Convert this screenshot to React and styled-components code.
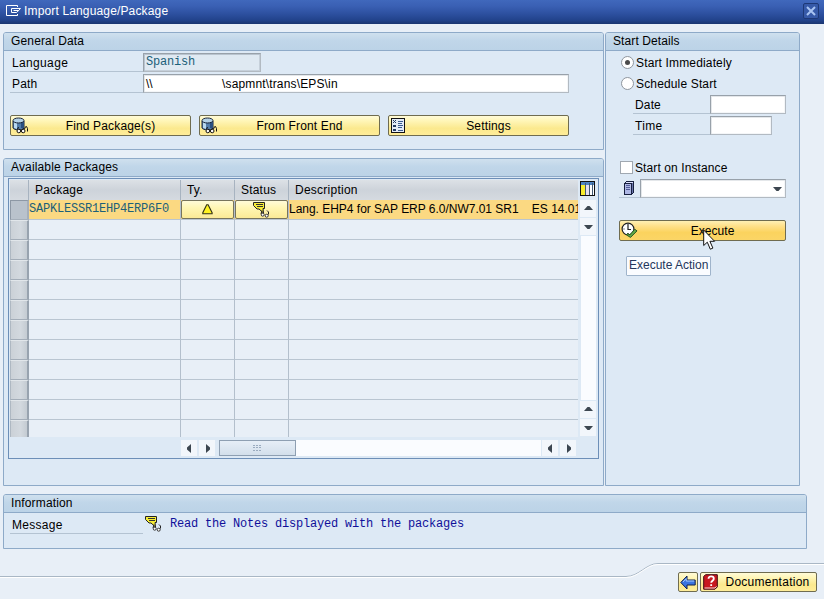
import React from "react";
import styled, { createGlobalStyle } from "styled-components";

const Global = createGlobalStyle`
  * { box-sizing: border-box; }
  body { margin: 0; overflow: hidden; }
`;

const Window = styled.div`
  width: 824px;
  height: 599px;
  display: flex;
  flex-direction: column;
  position: relative;
  background: #e8eff7;
  font: 12px/14px "Liberation Sans", Arial, sans-serif;
  color: #000;
  overflow: hidden;
`;

const Text = styled.span`
  white-space: pre;
  letter-spacing: ${(p) => p.$ls ?? 0.15}px;
`;

const Mono = styled.span`
  font: 12px/14px "Liberation Mono", "Courier New", monospace;
  letter-spacing: -0.2px;
  white-space: pre;
  color: ${(p) => p.$color || "#1c6079"};
`;

const TitleBar = styled.header`
  height: 24px;
  flex: none;
  display: flex;
  align-items: center;
  padding: 0 5px 2px 6px;
  gap: 3px;
  color: #fff;
  background: linear-gradient(#4068bc 0, #3a60b4 25%, #2c4f9e 60%, #21428a 85%, #1a3570 100%);
`;

const CloseButton = styled.button`
  margin-left: auto;
  width: 16px;
  height: 16px;
  padding: 0;
  display: grid;
  place-items: center;
  border: 1px solid #1d3876;
  border-radius: 2px;
  background: #3659a8;
`;

const Main = styled.main`
  height: 454px;
  margin: 8px 0 0 3px;
  display: flex;
  gap: 1px;
`;

const LeftColumn = styled.div`
  width: 601px;
  display: flex;
  flex-direction: column;
  gap: 8px;
`;

const Group = styled.section`
  width: ${(p) => p.$w}px;
  height: ${(p) => p.$h}px;
  flex: none;
  display: flex;
  flex-direction: column;
  border: 1px solid #8eaac8;
  border-radius: 3px 3px 0 0;
  background: #dde9f5;
`;

const GroupTitle = styled.h2`
  margin: 0;
  height: 18px;
  flex: none;
  padding: 1px 7px 0;
  font: inherit;
  line-height: 15px;
  border-bottom: 1px solid #8eaac8;
  border-radius: 2px 2px 0 0;
  background: linear-gradient(#cfe0ee, #c0d6e9 45%, #bcd3e7);
`;

const GeneralBody = styled.div`
  padding: 2px 6px;
`;

const FieldRow = styled.div`
  display: flex;
  height: 21px;
  align-items: flex-start;
`;

const Label = styled.label`
  width: ${(p) => p.$w}px;
  height: 19px;
  padding: 3px 0 0 2px;
  border-bottom: 1px solid #b4c3d2;
`;

const Field = styled.div`
  width: ${(p) => p.$w}px;
  height: 19px;
  padding: ${(p) => (p.$off ? 1 : 2)}px 2px 0;
  display: flex;
  justify-content: space-between;
  border: 1px solid;
  border-color: #98a1aa #b2bac2 #b2bac2 #98a1aa;
  box-shadow: inset 1px 1px 0 ${(p) => (p.$off ? "#b9c4cf" : "#e4e7ea")}, inset -1px -1px 0 ${(p) => (p.$off ? "#c6d0da" : "#f4f6f8")};
  background: ${(p) => (p.$off ? "#dfe9f2" : "#fff")};
`;

const PathHost = styled.span`
  width: 76px;
`;

const PathText = styled.div`
  display: flex;
`;

const ButtonRow = styled.div`
  display: flex;
  gap: 8px;
  padding-top: 20px;
`;

const Button = styled.button`
  width: ${(p) => p.$w}px;
  height: ${(p) => p.$h || 21}px;
  flex: none;
  display: grid;
  grid-template-columns: 17px 1fr;
  align-items: center;
  justify-items: center;
  padding: 0 0 0 1px;
  font: inherit;
  color: #000;
  border: 1px solid #6f6c50;
  border-radius: 2px;
  background: ${(p) =>
    p.$hot
      ? "linear-gradient(#fff0b4 0, #ffe18c 25%, #fbd35e 60%, #fbd566 100%)"
      : "linear-gradient(#fffbd8 0, #fff6b8 25%, #fbe98e 65%, #ffed99 100%)"};
`;

const ButtonText = styled(Text)`
  padding-left: ${(p) => p.$pl ?? 2}px;
`;

const StartBody = styled.div`
  padding: 2px 13px;
  display: flex;
  flex-direction: column;
`;

const Choice = styled.label`
  height: 21px;
  padding: 3px 0 0 2px;
  display: flex;
  gap: 2px;
`;

const Radio = styled.span`
  width: 13px;
  height: 13px;
  display: grid;
  place-items: center;
  border: 1px solid #8f969e;
  border-radius: 50%;
  background: #fff;

  &::after {
    content: "";
    width: 5px;
    height: 5px;
    border-radius: 50%;
    background: ${(p) => (p.$on ? "#4a4a4a" : "transparent")};
  }
`;

const CheckBox = styled.span`
  width: 13px;
  height: 13px;
  margin-left: -1px;
  border: 1px solid #a0a8b1;
  background: #fff;
`;

const TimeRows = styled.div`
  padding-left: 14px;
  height: 63px;
`;

const InstanceRow = styled.div`
  display: flex;
  height: 19px;
`;

const ServerCell = styled.div`
  width: 21px;
  height: 19px;
  padding: 2px 0 0 4px;
  border-bottom: 1px solid #b4c3d2;
`;

const Select = styled(Field)`
  align-items: center;
  justify-content: flex-end;
  padding: 0 3px 0 0;
`;

const ExecuteSlot = styled.div`
  padding-top: 22px;
`;

const Tip = styled.div`
  width: 85px;
  height: 20px;
  margin: 15px 0 0 7px;
  padding: 1px 2px;
  color: #24365c;
  border: 1px solid #9fb4cb;
  border-radius: 1px;
  background: #fafcff;
  white-space: nowrap;
`;

const Pointer = styled.svg`
  position: absolute;
  left: 703px;
  top: 229px;
`;

const TableFrame = styled.div`
  width: 591px;
  height: 281px;
  margin: 1px 0 0 4px;
  padding: 1px;
  border: 1px solid #6d8fb8;
  display: grid;
  grid-template-columns: 568px 18px;
  grid-template-rows: 257px 20px;
  column-gap: 2px;
`;

const Grid = styled.div`
  width: 568px;
  height: 257px;
  overflow: hidden;
`;

const Row = styled.div`
  display: grid;
  grid-template-columns: 19px 152px 54px 54px 289px;
  height: 20px;
`;

const HeadCell = styled.div`
  padding: 3px 0 0 6px;
  border-right: 1px solid #a7b3c0;
  background: linear-gradient(#dce1e6, #cdd3da 50%, #d5dae0);

  &:last-child { border-right: 0; }
`;

const Cell = styled.div`
  position: relative;
  overflow: hidden;
  white-space: nowrap;
  padding: ${(p) => (p.$button ? "0" : p.$mono ? "1px 0 0" : "2px 0 0")};
  border-right: 1px solid #b3bfcc;
  border-bottom: 1px solid #b9c5d1;
  background: ${(p) => (p.$on ? "#fbd982" : "#e8eff7")};

  &:last-child { border-right: 0; }
`;

const Selector = styled.div`
  border: 1px solid;
  border-color: ${(p) => (p.$on ? "#8d98a5 #a5afba #a5afba #8d98a5" : "#e1e6ea #98a3af #a3adb8 #aeb8c2")};
  border-right-width: 2px;
  background: ${(p) => (p.$on ? "#b9c2cc" : "linear-gradient(90deg, #cbd1d7, #d3d9df 60%, #c4cbd2)")};
`;

const CellButton = styled.button`
  width: 53px;
  height: 19px;
  padding: 0;
  display: grid;
  place-items: center;
  border: 1px solid #77745c;
  border-radius: 2px;
  background: linear-gradient(#fffbd8, #fff6b4 40%, #fbea96);
`;

const VBar = styled.div`
  width: 17px;
  height: 257px;
  display: flex;
  flex-direction: column;
`;

const VHead = styled.div`
  height: 20px;
  padding: 1px 0 0;
`;

const VTrack = styled.div`
  flex: 1;
  margin: 0 1px;
  background: #fafcff;
`;

const ArrowButton = styled.button`
  width: ${(p) => p.$w || 16}px;
  height: ${(p) => p.$h || 17}px;
  flex: none;
  padding: 0;
  margin: ${(p) => p.$m || "0 0 1px"};
  display: grid;
  place-items: center;
  border: 0;
  background: #f2f6fb;
`;

const HBar = styled.div`
  display: flex;
  padding: 3px 0 1px 171px;
`;

const HTrack = styled.div`
  flex: 1;
  height: 16px;
  margin-left: 4px;
  background: #fafcff;
`;

const HThumb = styled.div`
  width: 77px;
  height: 16px;
  display: grid;
  place-items: center;
  border: 1px solid #8e9fb2;
  background: linear-gradient(#e6eef7, #d3dfeb);
`;

const InfoSlot = styled.div`
  margin: 8px 0 0 3px;
`;

const InfoBody = styled.div`
  display: flex;
  padding: 2px 6px;
`;

const NoteSlot = styled.div`
  width: 27px;
  padding: 1px 0 0 2px;
`;

const MessageText = styled(Mono)`
  padding-top: 2px;
`;

const Footer = styled.footer`
  height: 50px;
  display: flex;
  justify-content: flex-end;
  gap: 2px;
  padding: 23px 7px 0 0;
  position: relative;
`;

const FooterLine = styled.svg`
  position: absolute;
  left: 0;
  top: 9px;
`;

const IconButton = styled(Button)`
  grid-template-columns: 1fr;
  padding: 0;
`;

const MenuIcon = () => (
  <svg width="15" height="12" viewBox="0 0 15 12" fill="none" stroke="#fff">
    <path d="M11.5 2V.5H.5v10h11V9" />
    <path d="M14.5 3.5h-9v4h5.2zM7.5 5.5h4.5" />
  </svg>
);

const DatabaseIcon = () => (
  <svg width="17" height="17" viewBox="0 0 17 17">
    <path d="M1 4v7c1 2 9 3 11 0V4z" fill="#527ca9" stroke="#182438" />
    <path d="M2 5h3v7L2 11z" fill="#b9d9ef" />
    <path d="M9 5h3v6H9z" fill="#294f80" />
    <ellipse cx="6.5" cy="3.5" rx="5.5" ry="2.5" fill="#b4d2e8" stroke="#182438" />
    <path d="M5.5 12l1-2M13.5 9.5h1l1 2v3" fill="none" stroke="#111" />
    <circle cx="6.8" cy="14" r="1.8" fill="#fff" stroke="#111" />
    <circle cx="11.2" cy="14" r="1.8" fill="#fff" stroke="#111" />
    <path d="M12.2 12.4l1.3-2.4" stroke="#111" />
  </svg>
);

const SettingsIcon = () => (
  <svg width="15" height="16" viewBox="0 0 15 16" shapeRendering="crispEdges">
    <rect x=".5" y=".5" width="13" height="14" fill="#e4ecf8" stroke="#111" />
    <path d="M7 3.5h5M7 5.5h4M7 7.5h5M7 9.5h4M7 12.5h5" stroke="#3c5d91" />
    <path d="M2 2h1v1h1V2h1v1H4v1h1v1H4V4H3v1H2V4h1V3H2zM2 7h3v2H2zM2 11h3v2H2z" fill="#263d64" />
  </svg>
);

const ExecuteIcon = () => (
  <svg width="17" height="17" viewBox="0 0 17 17">
    <circle cx="7" cy="7" r="5.9" fill="#fff" stroke="#222" strokeWidth="1.2" />
    <path d="M7 3v4.5h3M7 2v1M2.5 7h1M7 11v1" fill="none" stroke="#222" strokeWidth="1.2" />
    <path d="M6.5 11.5l2.3 1.3 5-5.6 2.2 1.7-6.5 6.5L5.5 13z" fill="#63ab48" stroke="#1d4c1c" strokeWidth=".9" />
  </svg>
);

const ServerIcon = () => (
  <svg width="12" height="15" viewBox="0 0 12 15" shapeRendering="crispEdges">
    <path d="M3 0h8v12h-1v1H9v1H1V2h1V1h1z" fill="#17203f" />
    <path d="M2 3h6v10H2z" fill="#aeb7e5" />
    <path d="M3 1h7v1H3z" fill="#dce1ff" />
    <path d="M3 4.5h4M3 6.5h4M3 8.5h4" stroke="#525d99" />
    <path d="M9 2h1v10H9z" fill="#6873ab" />
  </svg>
);

const NoteIcon = () => (
  <svg width="17" height="16" viewBox="0 0 17 16">
    <path d="M.5.5h11v6H10l.5 4.5-4.5-4H4L.5 3.5z" fill="#f8ee36" stroke="#222" />
    <path d="M3 2.5h7M4 4.5h6" stroke="#333" />
    <path d="M9 8.5L8 12M14 8.5l1.5 1.5v2.5" fill="none" stroke="#222" />
    <circle cx="9.7" cy="12.7" r="1.5" fill="#fff" stroke="#222" strokeWidth=".9" />
    <circle cx="13.7" cy="13.7" r="1.5" fill="#fff" stroke="#222" strokeWidth=".9" />
  </svg>
);

const WarningIcon = () => (
  <svg width="11" height="11" viewBox="0 0 11 11">
    <path d="M4.7.7h1.4l4 8v1H.8v-1z" fill="#fff321" stroke="#303018" strokeWidth="1.1" />
  </svg>
);

const ColumnsIcon = () => (
  <svg width="16" height="16" viewBox="0 0 16 16" shapeRendering="crispEdges">
    <rect x=".5" y=".5" width="14" height="14" fill="#fff" stroke="#111" />
    <path d="M1 1h13v3H1z" fill="#4d83c2" />
    <path d="M1 4h4v10H1z" fill="#f7ec2f" />
    <path d="M6 4h3v10H6z" fill="#e6dfef" />
    <path d="M5.5 2v12M9.5 2v12M12.5 2v12" stroke="#405873" />
  </svg>
);

const arrows = {
  up: "M0 6h9L5.5 2h-2z",
  down: "M0 3h9L5.5 7h-2z",
  left: "M6 0v9L2 5.5v-2z",
  right: "M3 0v9l4-3.5v-2z",
};

const Arrow = ({ dir }) => (
  <svg width="9" height="9" viewBox="0 0 9 9">
    <path d={arrows[dir]} fill="#3c4650" />
  </svg>
);

const BackIcon = () => (
  <svg width="16" height="15" viewBox="0 0 16 15">
    <path d="M.8 7.5L7 1v4h8.2v5H7v4z" fill="#3b74e0" stroke="#10204c" />
    <path d="M3 7l3.2-3.4V6h8" fill="none" stroke="#a5ccff" />
  </svg>
);

const HelpIcon = () => (
  <svg width="15" height="16" viewBox="0 0 15 16">
    <path d="M2.5.7h11.8v12.2L12 15.2H.7V2.5z" fill="#c81820" stroke="#3c0810" />
    <path d="M1.5 14h10.5l1.5-1.7" fill="none" stroke="#f4d7d4" />
    <path d="M5.5 4.7c0-3 5.3-3 5.3 0 0 2-2.6 2-2.6 4.1M8.2 10.2v1.9" fill="none" stroke="#fff" strokeWidth="1.8" />
  </svg>
);

const Grip = () => (
  <svg width="9" height="8" viewBox="0 0 9 8" shapeRendering="crispEdges">
    {[2, 4, 7].map((y) => (
      <path key={y} d={`M0 ${y - 0.5}h2M3 ${y - 0.5}h2M6 ${y - 0.5}h2`} stroke="#9aabbf" />
    ))}
  </svg>
);

const emptyRows = Array.from({ length: 11 }, (_, i) => i);

const PackageTable = () => (
  <TableFrame>
    <Grid>
      <Row>
        <HeadCell />
        <HeadCell><Text $ls={0.2}>Package</Text></HeadCell>
        <HeadCell><Text>Ty.</Text></HeadCell>
        <HeadCell><Text $ls={0.2}>Status</Text></HeadCell>
        <HeadCell><Text $ls={0.25}>Description</Text></HeadCell>
      </Row>
      <Row>
        <Selector $on />
        <Cell $on $mono><Mono>SAPKLESSR1EHP4ERP6F0</Mono></Cell>
        <Cell $on $button><CellButton><WarningIcon /></CellButton></Cell>
        <Cell $on $button><CellButton><NoteIcon /></CellButton></Cell>
        <Cell $on><Text $ls={-0.02}>Lang. EHP4 for SAP ERP 6.0/NW7.01 SR1    ES 14.01</Text></Cell>
      </Row>
      {emptyRows.map((i) => (
        <Row key={i}><Selector /><Cell /><Cell /><Cell /><Cell /></Row>
      ))}
    </Grid>
    <VBar>
      <VHead><ColumnsIcon /></VHead>
      <ArrowButton><Arrow dir="up" /></ArrowButton>
      <ArrowButton><Arrow dir="down" /></ArrowButton>
      <VTrack />
      <ArrowButton $m="1px 0"><Arrow dir="up" /></ArrowButton>
      <ArrowButton $m="0 0 1px"><Arrow dir="down" /></ArrowButton>
    </VBar>
    <HBar>
      <ArrowButton $h={16} $m="0 2px 0 0"><Arrow dir="left" /></ArrowButton>
      <ArrowButton $h={16} $m="0"><Arrow dir="right" /></ArrowButton>
      <HTrack><HThumb><Grip /></HThumb></HTrack>
      <ArrowButton $h={16} $m="0 2px 0 1px"><Arrow dir="left" /></ArrowButton>
      <ArrowButton $h={16} $m="0 2px 0 0"><Arrow dir="right" /></ArrowButton>
    </HBar>
  </TableFrame>
);

export default function App() {
  return (
    <Window>
      <Global />
      <TitleBar>
        <MenuIcon />
        <Text>Import Language/Package</Text>
        <CloseButton aria-label="Close">
          <svg width="10" height="10" viewBox="0 0 10 10"><path d="M1 1l8 8M9 1L1 9" stroke="#a9c4f3" strokeWidth="2" /></svg>
        </CloseButton>
      </TitleBar>
      <Main>
        <LeftColumn>
          <Group $w={601} $h={118}>
            <GroupTitle><Text>General Data</Text></GroupTitle>
            <GeneralBody>
              <FieldRow>
                <Label $w={133}><Text $ls={0.35}>Language</Text></Label>
                <Field $w={118} $off><Mono>Spanish</Mono></Field>
              </FieldRow>
              <FieldRow>
                <Label $w={133}><Text>Path</Text></Label>
                <Field $w={426}>
                  <PathText><PathHost>\\</PathHost><Text $ls={0.15}>\sapmnt\trans\EPS\in</Text></PathText>
                </Field>
              </FieldRow>
              <ButtonRow>
                <Button $w={181}><DatabaseIcon /><ButtonText>Find Package(s)</ButtonText></Button>
                <Button $w={181}><DatabaseIcon /><ButtonText>From Front End</ButtonText></Button>
                <Button $w={181}><SettingsIcon /><ButtonText>Settings</ButtonText></Button>
              </ButtonRow>
            </GeneralBody>
          </Group>
          <Group $w={601} $h={328}>
            <GroupTitle><Text>Available Packages</Text></GroupTitle>
            <PackageTable />
          </Group>
        </LeftColumn>
        <Group $w={195} $h={454}>
          <GroupTitle><Text $ls={0.1}>Start Details</Text></GroupTitle>
          <StartBody>
            <Choice><Radio $on /><Text>Start Immediately</Text></Choice>
            <Choice><Radio /><Text>Schedule Start</Text></Choice>
            <TimeRows>
              <FieldRow><Label $w={77}><Text>Date</Text></Label><Field $w={76} /></FieldRow>
              <FieldRow><Label $w={77}><Text $ls={0.35}>Time</Text></Label><Field $w={62} /></FieldRow>
            </TimeRows>
            <Choice><CheckBox /><Text $ls={0.1}>Start on Instance</Text></Choice>
            <InstanceRow>
              <ServerCell><ServerIcon /></ServerCell>
              <Select $w={146}><Arrow dir="down" /></Select>
            </InstanceRow>
            <ExecuteSlot>
              <Button $w={167} $hot><ExecuteIcon /><ButtonText $ls={0.05}>Execute</ButtonText></Button>
            </ExecuteSlot>
            <Tip><Text $ls={0}>Execute Action</Text></Tip>
          </StartBody>
        </Group>
      </Main>
      <InfoSlot>
        <Group $w={804} $h={55}>
          <GroupTitle><Text>Information</Text></GroupTitle>
          <InfoBody>
            <Label $w={133}><Text $ls={0.3}>Message</Text></Label>
            <NoteSlot><NoteIcon /></NoteSlot>
            <MessageText $color="#10109a">Read the Notes displayed with the packages</MessageText>
          </InfoBody>
        </Group>
      </InfoSlot>
      <Footer>
        <FooterLine width="824" height="40" viewBox="0 0 824 40" fill="none">
          <path d="M0 18.5h626c13 0 20-13 32-13h166" stroke="#a9b7c5" />
          <path d="M0 19.5h626c13 0 20-13 32-13h166" stroke="#fff" />
        </FooterLine>
        <IconButton $w={20} $h={20}><BackIcon /></IconButton>
        <Button $w={117} $h={20}><HelpIcon /><ButtonText $pl={0} $ls={0.25}>Documentation</ButtonText></Button>
      </Footer>
      <Pointer width="14" height="22" viewBox="0 0 14 22">
        <path d="M.7 1v15.5l3.6-3.3 3 7 2.6-1.1-3-6.8h4.7z" fill="#fff" stroke="#111" />
      </Pointer>
    </Window>
  );
}
